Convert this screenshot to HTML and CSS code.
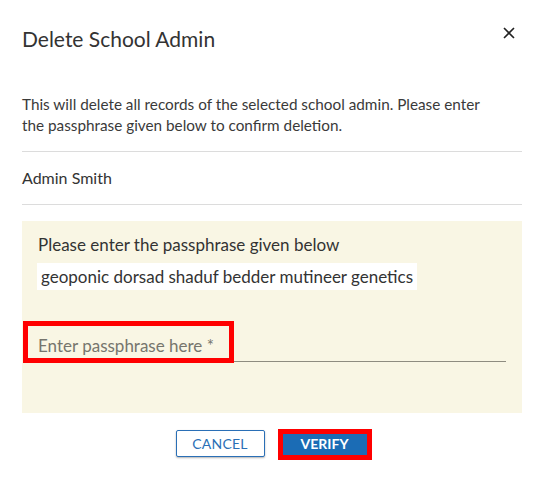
FILE: index.html
```html
<!DOCTYPE html>
<html lang="en">
<head>
<meta charset="utf-8">
<title>Delete School Admin</title>
<link rel="stylesheet" href="styles.css">
</head>
<body>
<div class="dialog">
  <div class="header">
    <h1 class="title">Delete School Admin</h1>
    <button class="close" aria-label="Close">
      <svg width="12" height="12" viewBox="0 0 12 12"><path d="M1 1L11 11M11 1L1 11" stroke="#222" stroke-width="1.6" fill="none"/></svg>
    </button>
  </div>
  <p class="intro">This will delete all records of the selected school admin. Please enter the passphrase given below to confirm deletion.</p>
  <div class="name">Admin Smith</div>
  <div class="confirm">
    <div class="label">Please enter the passphrase given below</div>
    <div class="phrase-row"><span class="phrase">geoponic dorsad shaduf bedder mutineer genetics</span></div>
    <div class="field">
      <input class="input" type="text" placeholder="Enter passphrase here *">
      <span class="mark mark-field"></span>
    </div>
  </div>
  <div class="actions">
    <button class="btn btn-cancel">CANCEL</button>
    <button class="btn btn-verify">VERIFY<span class="mark mark-btn"></span></button>
  </div>
</div>
</body>
</html>
```

FILE: styles.css
```css
* { box-sizing: border-box; }
html, body { margin: 0; padding: 0; background: #fff; }
body {
  font-family: Lato, "Noto Sans", sans-serif;
  color: #333;
  width: 544px;
  height: 480px;
  overflow: hidden;
}
.dialog { padding: 0 22px; }
.header {
  display: flex;
  justify-content: space-between;
  align-items: flex-start;
  margin-top: 25px;
}
.title {
  margin: 0;
  font-size: 21px;
  line-height: 28px;
  font-weight: 400;
  color: #333;
}
.close {
  border: 0;
  background: none;
  padding: 0;
  margin: 2px 7px 0 0;
  width: 12px;
  height: 12px;
  display: flex;
}
.intro {
  margin: 41px 0 15px;
  font-size: 15.3px;
  line-height: 21px;
  color: #3a3a3a;
  max-width: 472px;
}
.name {
  border-top: 1px solid #dcdcdc;
  border-bottom: 1px solid #dcdcdc;
  padding: 14px 0;
  font-size: 16px;
  line-height: 24px;
  color: #333;
}
.confirm {
  margin-top: 16px;
  background: #f9f6e4;
  padding: 12px 16px 51px;
}
.label {
  font-size: 17px;
  line-height: 24px;
  color: #333;
}
.phrase-row { margin-top: 6px; }
.phrase {
  display: inline-block;
  background: #fff;
  margin-left: -1px;
  padding: 2px 4px;
  font-size: 17px;
  line-height: 23px;
  color: #333;
}
.field {
  position: relative;
  margin-top: 41px;
}
.input {
  display: block;
  width: 100%;
  border: 0;
  border-bottom: 1px solid #8e8c80;
  background: transparent;
  padding: 5px 0 5px;
  font-family: Lato, "Noto Sans", sans-serif;
  font-size: 17px;
  line-height: 20px;
  color: #333;
  outline: none;
}
.input::placeholder { color: #76756d; opacity: 1; }
.mark {
  position: absolute;
  border: 5px solid #ff0000;
  pointer-events: none;
}
.mark-field {
  left: -15px;
  top: -10px;
  width: 211px;
  height: 42px;
}
.actions {
  margin-top: 17px;
  display: flex;
  justify-content: center;
  gap: 16px;
}
.btn {
  position: relative;
  height: 27px;
  padding: 0;
  font-family: Lato, "Noto Sans", sans-serif;
  font-size: 14px;
  line-height: 25px;
  cursor: pointer;
}
.btn-cancel {
  width: 89px;
  background: #fff;
  color: #2a6fb6;
  border: 1px solid #2a6fb6;
  border-radius: 2px;
  box-shadow: 0 1px 2px rgba(0, 0, 0, 0.3);
  font-weight: 400;
  letter-spacing: 0.2px;
}
.btn-verify {
  width: 88px;
  background: #1b6cb5;
  color: #fff;
  border: 1px solid #1b6cb5;
  font-weight: 700;
  font-size: 14px;
}
.mark-btn {
  top: -2px;
  left: -4px;
  right: -4px;
  bottom: -4px;
}
```
